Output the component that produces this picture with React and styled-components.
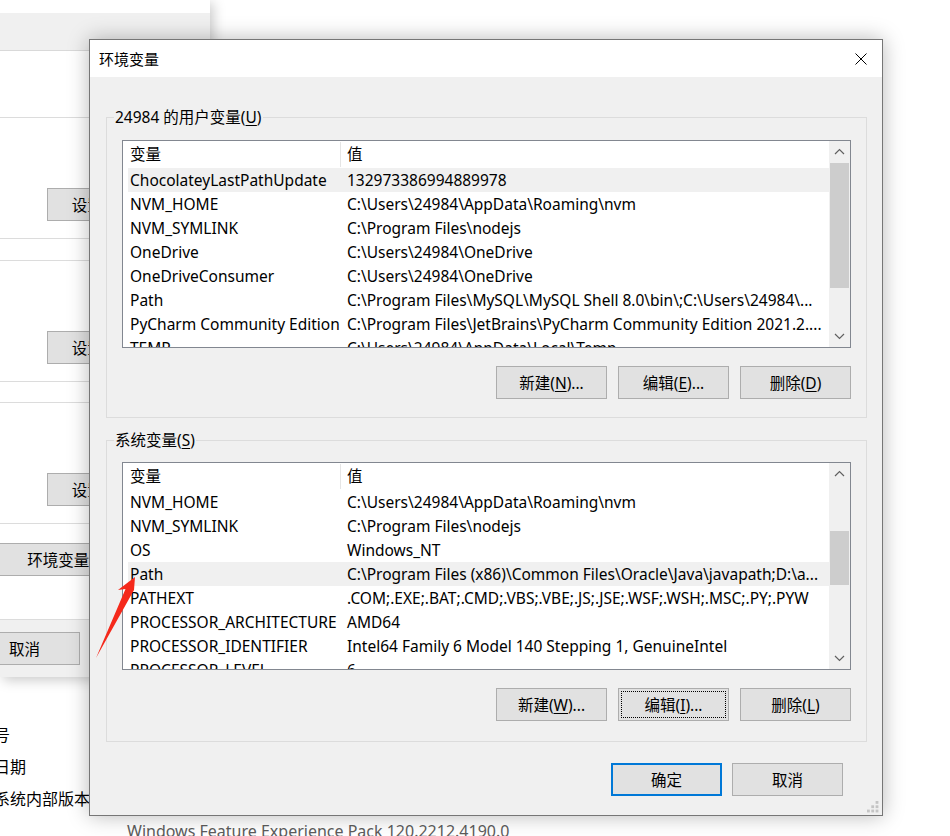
import React from "react";
import styled, { createGlobalStyle } from "styled-components";

const UI_FONT = `"Noto Sans", "Noto Sans CJK SC", sans-serif`;

const GlobalStyle = createGlobalStyle`
  html, body {
    margin: 0;
    padding: 0;
    background: #fff;
  }
  body {
    font-family: ${UI_FONT};
    color: #000;
  }
  * {
    box-sizing: border-box;
  }
`;

const userVars = [
  ["ChocolateyLastPathUpdate", "132973386994889978"],
  ["NVM_HOME", "C:\\Users\\24984\\AppData\\Roaming\\nvm"],
  ["NVM_SYMLINK", "C:\\Program Files\\nodejs"],
  ["OneDrive", "C:\\Users\\24984\\OneDrive"],
  ["OneDriveConsumer", "C:\\Users\\24984\\OneDrive"],
  ["Path", "C:\\Program Files\\MySQL\\MySQL Shell 8.0\\bin\\;C:\\Users\\24984\\..."],
  ["PyCharm Community Edition", "C:\\Program Files\\JetBrains\\PyCharm Community Edition 2021.2...."],
  ["TEMP", "C:\\Users\\24984\\AppData\\Local\\Temp"],
];

const systemVars = [
  ["NVM_HOME", "C:\\Users\\24984\\AppData\\Roaming\\nvm"],
  ["NVM_SYMLINK", "C:\\Program Files\\nodejs"],
  ["OS", "Windows_NT"],
  ["Path", "C:\\Program Files (x86)\\Common Files\\Oracle\\Java\\javapath;D:\\a..."],
  ["PATHEXT", ".COM;.EXE;.BAT;.CMD;.VBS;.VBE;.JS;.JSE;.WSF;.WSH;.MSC;.PY;.PYW"],
  ["PROCESSOR_ARCHITECTURE", "AMD64"],
  ["PROCESSOR_IDENTIFIER", "Intel64 Family 6 Model 140 Stepping 1, GenuineIntel"],
  ["PROCESSOR_LEVEL", "6"],
];

const specs = [
  ["版本号", ""],
  ["安装日期", ""],
  ["操作系统内部版本", ""],
  ["体验", "Windows Feature Experience Pack 120.2212.4190.0"],
];

/* ---------- desktop ---------- */

const Desktop = styled.div`
  position: relative;
  width: 950px;
  height: 836px;
  overflow: hidden;
  background: #fff;
`;

const SpecList = styled.div`
  display: flex;
  flex-direction: column;
  padding-top: 719px;
  margin-left: -38px;
  font-size: 16px;
`;

const SpecRow = styled.div`
  display: flex;
  height: 32px;
  line-height: 32px;
  white-space: nowrap;
`;

const SpecLabel = styled.div`
  width: 165px;
  flex-shrink: 0;
  color: #000;
`;

const SpecValue = styled.div`
  color: #5c5c5c;
`;

/* ---------- system properties window (behind) ---------- */

const SysWindow = styled.div`
  position: absolute;
  left: 0;
  top: 0;
  width: 210px;
  height: 677px;
  background: #fff;
  box-shadow: 3px 3px 12px rgba(0, 0, 0, 0.22);
  display: flex;
  flex-direction: column;
  overflow: hidden;
`;

const TabStrip = styled.div`
  flex-shrink: 0;
  height: 38px;
  margin-top: 13px;
  background: #f0f0f0;
  border-bottom: 1px solid #d9d9d9;
`;

const SysGroup = styled.div`
  flex-shrink: 0;
  height: 122px;
  margin-top: ${(p) => p.$gap}px;
  padding: 70px 0 0 47px;
  border-top: 1px solid #dcdcdc;
  border-bottom: 1px solid #dcdcdc;
`;

const SysFooter = styled.div`
  margin-top: auto;
  height: 58px;
  padding-top: 12px;
  background: #f0f0f0;
  border-top: 1px solid #dcdcdc;
`;

/* ---------- buttons ---------- */

const PushButton = styled.button`
  flex-shrink: 0;
  width: ${(p) => p.$w || 111}px;
  height: 33px;
  margin: ${(p) => p.$margin || "0"};
  padding: 0;
  background: #e1e1e1;
  border: ${(p) => (p.$default ? "2px solid #0078d7" : "1px solid #adadad")};
  outline: ${(p) => (p.$focused ? "1px dotted #000" : "none")};
  outline-offset: -4px;
  font-family: ${UI_FONT};
  font-size: 15.5px;
  color: #000;
  white-space: nowrap;

  u {
    text-decoration: underline;
    text-underline-offset: 2px;
  }
`;

/* ---------- env dialog ---------- */

const Dialog = styled.div`
  position: absolute;
  left: 89px;
  top: 39px;
  width: 794px;
  height: 777px;
  background: #f0f0f0;
  border: 1px solid #767676;
  box-shadow: 0 0 20px rgba(0, 0, 0, 0.28);
  display: flex;
  flex-direction: column;
  font-size: 15.5px;
`;

const TitleBar = styled.div`
  display: flex;
  align-items: center;
  justify-content: space-between;
  height: 37px;
  flex-shrink: 0;
  padding-left: 9px;
  background: #fff;
  line-height: 20px;
  font-size: 15px;
`;

const CloseBox = styled.div`
  width: 42px;
  height: 37px;
  display: flex;
  align-items: center;
  justify-content: center;
`;

const Group = styled.fieldset`
  margin: ${(p) => p.$mt}px 15px 0 16px;
  padding: ${(p) => p.$pt}px 15px ${(p) => p.$pb}px;
  border: 1px solid #dcdcdc;
  min-width: 0;
`;

const GroupLabel = styled.legend`
  margin-left: -8px;
  padding: 0 1px;
  font-size: 15.5px;
  line-height: 20px;

  u {
    text-underline-offset: 2px;
  }
`;

const ListBox = styled.div`
  display: flex;
  height: 208px;
  background: #fff;
  border: 1px solid #828790;
  overflow: hidden;
`;

const ListContent = styled.div`
  flex: 1;
  min-width: 0;
  padding-left: 5px;
  overflow: hidden;
`;

const HeaderRow = styled.div`
  display: flex;
  height: 27px;
  align-items: center;
`;

const HeaderCell = styled.div`
  height: 25px;
  line-height: 25px;
  padding-left: ${(p) => (p.$first ? 2 : 6)}px;
  width: ${(p) => (p.$first ? "213px" : "auto")};
  flex-shrink: 0;
  border-right: ${(p) => (p.$first ? "1px solid #e5e5e5" : "none")};
`;

const Row = styled.div`
  display: flex;
  height: 24px;
  line-height: 24px;
  background: ${(p) => (p.$selected ? "#f0f0f0" : "transparent")};
  white-space: nowrap;
`;

const NameCell = styled.div`
  width: 213px;
  flex-shrink: 0;
  padding-left: 2px;
  overflow: hidden;
`;

const ValueCell = styled.div`
  flex: 1;
  min-width: 0;
  padding-left: 6px;
  overflow: hidden;
`;

const Scroll = styled.div`
  width: 21px;
  flex-shrink: 0;
  display: flex;
  flex-direction: column;
  background: #f0f0f0;
`;

const ScrollArrow = styled.div`
  height: 21px;
  flex-shrink: 0;
  display: flex;
  align-items: center;
  justify-content: center;
`;

const ScrollRail = styled.div`
  flex: 1;
  padding: 0 1px;
`;

const Thumb = styled.div`
  margin-top: ${(p) => p.$top}px;
  height: ${(p) => p.$size}px;
  background: #cdcdcd;
`;

const ButtonRow = styled.div`
  display: flex;
  justify-content: flex-end;
  gap: ${(p) => p.$gap || 11}px;
  margin-top: ${(p) => p.$mt}px;
  padding-right: ${(p) => p.$pr || 0}px;
`;

const Grip = styled.svg`
  position: absolute;
  right: 3px;
  bottom: 2px;
`;

const Overlay = styled.svg`
  position: absolute;
  left: 0;
  top: 0;
  pointer-events: none;
`;

const Chevron = ({ up }) => (
  <svg width="11" height="7" viewBox="0 0 11 7">
    <polyline
      points={up ? "1,6 5.5,1.5 10,6" : "1,1 5.5,5.5 10,1"}
      fill="none"
      stroke="#606060"
      strokeWidth="1.2"
    />
  </svg>
);

const VarList = ({ rows, selected, thumbTop, thumbSize }) => (
  <ListBox>
    <ListContent>
      <HeaderRow>
        <HeaderCell $first>变量</HeaderCell>
        <HeaderCell>值</HeaderCell>
      </HeaderRow>
      {rows.map(([name, value], i) => (
        <Row key={name} $selected={i === selected}>
          <NameCell>{name}</NameCell>
          <ValueCell>{value}</ValueCell>
        </Row>
      ))}
    </ListContent>
    <Scroll>
      <ScrollArrow>
        <Chevron up />
      </ScrollArrow>
      <ScrollRail>
        <Thumb $top={thumbTop} $size={thumbSize} />
      </ScrollRail>
      <ScrollArrow>
        <Chevron />
      </ScrollArrow>
    </Scroll>
  </ListBox>
);

const App = () => {
  return (
    <>
      <GlobalStyle />
      <Desktop>
        <SpecList>
          {specs.map(([label, value]) => (
            <SpecRow key={label}>
              <SpecLabel>{label}</SpecLabel>
              <SpecValue>{value}</SpecValue>
            </SpecRow>
          ))}
        </SpecList>

        <SysWindow>
          <TabStrip />
          <SysGroup $gap={66}>
            <PushButton>设置(<u>S</u>)...</PushButton>
          </SysGroup>
          <SysGroup $gap={21}>
            <PushButton>设置(<u>S</u>)...</PushButton>
          </SysGroup>
          <SysGroup $gap={20}>
            <PushButton>设置(<u>T</u>)...</PushButton>
          </SysGroup>
          <PushButton $w={158} $margin="19px 0 0 -4px">
            环境变量(<u>N</u>)...
          </PushButton>
          <SysFooter>
            <PushButton $margin="0 0 0 -31px">取消</PushButton>
          </SysFooter>
        </SysWindow>

        <Dialog>
          <TitleBar>
            <span>环境变量</span>
            <CloseBox>
              <svg width="12" height="12" viewBox="0 0 12 12">
                <path d="M0.5 0.5 L11.5 11.5 M11.5 0.5 L0.5 11.5" stroke="#000" strokeWidth="1" />
              </svg>
            </CloseBox>
          </TitleBar>

          <Group $mt={30} $pt={13} $pb={18}>
            <GroupLabel>
              24984 的用户变量(<u>U</u>)
            </GroupLabel>
            <VarList rows={userVars} selected={0} thumbTop={1} thumbSize={125} />
            <ButtonRow $mt={18}>
              <PushButton>新建(<u>N</u>)...</PushButton>
              <PushButton>编辑(<u>E</u>)...</PushButton>
              <PushButton>删除(<u>D</u>)</PushButton>
            </ButtonRow>
          </Group>

          <Group $mt={12} $pt={12} $pb={20}>
            <GroupLabel>
              系统变量(<u>S</u>)
            </GroupLabel>
            <VarList rows={systemVars} selected={3} thumbTop={47} thumbSize={54} />
            <ButtonRow $mt={18}>
              <PushButton>新建(<u>W</u>)...</PushButton>
              <PushButton $focused>编辑(<u>I</u>)...</PushButton>
              <PushButton>删除(<u>L</u>)</PushButton>
            </ButtonRow>
          </Group>

          <ButtonRow $mt={21} $gap={10} $pr={39}>
            <PushButton $default>确定</PushButton>
            <PushButton>取消</PushButton>
          </ButtonRow>

          <Grip width="12" height="12" viewBox="0 0 12 12">
            <rect x="8.6" y="0" width="2.8" height="2.8" fill="#c4c4c4" />
            <rect x="4.3" y="4.3" width="2.8" height="2.8" fill="#c4c4c4" />
            <rect x="8.6" y="4.3" width="2.8" height="2.8" fill="#c4c4c4" />
            <rect x="0" y="8.6" width="2.8" height="2.8" fill="#c4c4c4" />
            <rect x="4.3" y="8.6" width="2.8" height="2.8" fill="#c4c4c4" />
            <rect x="8.6" y="8.6" width="2.8" height="2.8" fill="#c4c4c4" />
          </Grip>
        </Dialog>

        <Overlay width="950" height="836" viewBox="0 0 950 836">
          <polygon points="135,577 118,590 125.5,589 96,658 134,590" fill="#f5291b" />
        </Overlay>
      </Desktop>
    </>
  );
};

export default App;
